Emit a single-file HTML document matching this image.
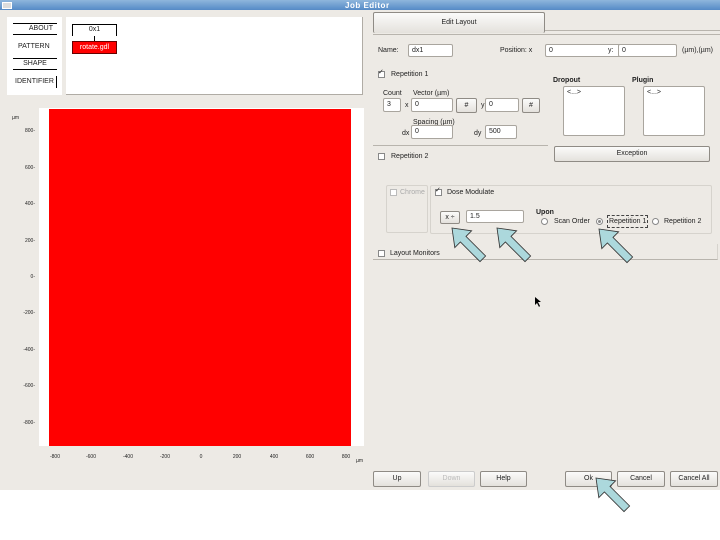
<!DOCTYPE html>
<html><head><style>
*{margin:0;padding:0;box-sizing:border-box}
body{width:720px;height:540px;background:#fff;position:relative;overflow:hidden;font-family:"Liberation Sans",sans-serif;font-size:7px;color:#222}
.a{position:absolute}
.bg{left:0;top:10px;width:720px;height:480px;background:#edeae5}
.t{position:absolute;white-space:nowrap}
.in{position:absolute;background:#fff;border:1px solid #a9a59e;border-radius:2px;padding-left:3px;line-height:12px}
.btn{position:absolute;height:16px;border:1px solid #8f8b85;border-radius:2px;background:linear-gradient(#fbfbfa,#e4e1dc);text-align:center;line-height:14px}
.cb{position:absolute;width:7px;height:7px;border:1px solid #888;background:#fff}
.ln{position:absolute;background:#b8b4ad}
.yl{position:absolute;left:18px;width:17px;font-size:5px;text-align:right}
.xl{position:absolute;top:454px;width:20px;margin-left:-10px;font-size:5px;text-align:center}
</style></head><body>
<div class="a" style="left:0;top:0;width:720px;height:11px;background:linear-gradient(#8fb6dc,#4f86c4)"></div>
<div class="a" style="left:2px;top:2px;width:10px;height:7px;background:#ddd;border:1px solid #fff"></div>
<div class="t" style="left:345px;top:1px;color:#fff;font-size:8px;font-weight:bold;letter-spacing:.5px">Job Editor</div>
<div class="a bg"></div>

<div class="a" style="left:7px;top:17px;width:55px;height:78px;background:#fff"></div>
<div class="a" style="left:13px;top:23px;width:44px;height:12px;border-top:1px solid #000;border-bottom:1px solid #000;text-align:right;padding-right:4px;line-height:10px">ABOUT</div>
<div class="t" style="left:18px;top:43px">PATTERN</div>
<div class="a" style="left:13px;top:58px;width:44px;height:12px;border-top:1px solid #000;border-bottom:1px solid #000;text-align:center;line-height:10px">SHAPE</div>
<div class="t" style="left:15px;top:78px">IDENTIFIER</div>
<div class="a" style="left:56px;top:76px;width:1px;height:12px;background:#000"></div>
<div class="a" style="left:66px;top:17px;width:297px;height:78px;background:#fff;border-right:1px solid #b0aca5;border-bottom:1px solid #b0aca5"></div>
<div class="a" style="left:72px;top:24px;width:45px;height:12px;border:1px solid #000;border-bottom:none;text-align:center;line-height:10px">0x1</div>
<div class="a" style="left:94px;top:36px;width:1px;height:5px;background:#000"></div>
<div class="a" style="left:72px;top:41px;width:45px;height:13px;background:#f00;border:1px solid #600;color:#fff;text-align:center;line-height:11px">rotate.gdl</div>

<div class="a" style="left:39px;top:108px;width:325px;height:338px;background:#fff"></div>
<div class="a" style="left:49px;top:109px;width:302px;height:337px;background:#f00"></div>
<div class="t" style="left:12px;top:115px;font-size:5px">µm</div>
<div class="yl" style="top:128px">800-</div>
<div class="yl" style="top:165px">600-</div>
<div class="yl" style="top:201px">400-</div>
<div class="yl" style="top:238px">200-</div>
<div class="yl" style="top:274px">0-</div>
<div class="yl" style="top:310px">-200-</div>
<div class="yl" style="top:347px">-400-</div>
<div class="yl" style="top:383px">-600-</div>
<div class="yl" style="top:420px">-800-</div>
<div class="xl" style="left:55px">-800</div>
<div class="xl" style="left:91px">-600</div>
<div class="xl" style="left:128px">-400</div>
<div class="xl" style="left:165px">-200</div>
<div class="xl" style="left:201px">0</div>
<div class="xl" style="left:237px">200</div>
<div class="xl" style="left:274px">400</div>
<div class="xl" style="left:310px">600</div>
<div class="xl" style="left:346px">800</div>
<div class="t" style="left:356px;top:458px;font-size:5px">µm</div>

<div class="btn" style="left:373px;top:12px;width:172px;height:21px;line-height:19px;border-bottom:none">Edit Layout</div>
<div class="ln" style="left:545px;top:30px;width:175px;height:1px"></div>
<div class="ln" style="left:373px;top:34px;width:347px;height:1px"></div>

<div class="t" style="left:378px;top:47px">Name:</div>
<div class="in" style="left:408px;top:44px;width:45px;height:13px">dx1</div>
<div class="t" style="left:500px;top:47px">Position: x</div>
<div class="in" style="left:545px;top:44px;width:89px;height:13px">0</div>
<div class="t" style="left:608px;top:47px">y:</div>
<div class="in" style="left:618px;top:44px;width:59px;height:13px">0</div>
<div class="t" style="left:682px;top:47px">(µm),(µm)</div>

<div class="cb" style="left:378px;top:71px"></div><div class="t" style="left:378px;top:68px">✓</div>
<div class="t" style="left:391px;top:71px">Repetition 1</div>
<div class="t" style="left:383px;top:90px">Count</div>
<div class="t" style="left:413px;top:90px">Vector (µm)</div>
<div class="in" style="left:383px;top:98px;width:18px;height:14px">3</div>
<div class="t" style="left:405px;top:102px">x</div>
<div class="in" style="left:411px;top:98px;width:42px;height:14px">0</div>
<div class="btn" style="left:456px;top:98px;width:21px;height:15px">#</div>
<div class="t" style="left:481px;top:102px">y</div>
<div class="in" style="left:485px;top:98px;width:34px;height:14px">0</div>
<div class="btn" style="left:522px;top:98px;width:18px;height:15px">#</div>
<div class="t" style="left:413px;top:119px">Spacing (µm)</div>
<div class="t" style="left:402px;top:130px">dx</div>
<div class="in" style="left:411px;top:125px;width:42px;height:14px">0</div>
<div class="t" style="left:474px;top:130px">dy</div>
<div class="in" style="left:485px;top:125px;width:32px;height:14px">500</div>
<div class="ln" style="left:373px;top:145px;width:175px;height:1px"></div>
<div class="t" style="left:553px;top:77px;font-weight:bold">Dropout</div>
<div class="t" style="left:632px;top:77px;font-weight:bold">Plugin</div>
<div class="in" style="left:563px;top:86px;width:62px;height:50px;line-height:12px">&lt;...&gt;</div>
<div class="in" style="left:643px;top:86px;width:62px;height:50px;line-height:12px">&lt;...&gt;</div>
<div class="cb" style="left:378px;top:153px"></div>
<div class="t" style="left:391px;top:153px">Repetition 2</div>
<div class="btn" style="left:554px;top:146px;width:156px;height:16px">Exception</div>

<div class="a" style="left:386px;top:185px;width:42px;height:48px;border:1px solid #d6d3cd;border-radius:2px"></div>
<div class="cb" style="left:390px;top:189px;border-color:#bbb"></div>
<div class="t" style="left:400px;top:189px;color:#aaa">Chrome</div>
<div class="a" style="left:430px;top:185px;width:282px;height:49px;border:1px solid #d6d3cd;border-radius:2px"></div>
<div class="cb" style="left:435px;top:189px"></div><div class="t" style="left:435px;top:186px">✓</div>
<div class="t" style="left:447px;top:189px">Dose Modulate</div>
<div class="btn" style="left:440px;top:211px;width:20px;height:13px;line-height:11px">x ÷</div>
<div class="in" style="left:466px;top:210px;width:58px;height:13px">1.5</div>
<div class="t" style="left:536px;top:209px;font-weight:bold">Upon</div>
<div class="a" style="left:541px;top:218px;width:7px;height:7px;border:1px solid #888;border-radius:50%;background:#fff"></div>
<div class="t" style="left:554px;top:218px">Scan Order</div>
<div class="a" style="left:596px;top:218px;width:7px;height:7px;border:1px solid #888;border-radius:50%;background:#fff"></div>
<div class="a" style="left:598px;top:220px;width:3px;height:3px;border-radius:50%;background:#888"></div>
<div class="a" style="left:607px;top:215px;width:41px;height:13px;border:1px dashed #444"></div>
<div class="t" style="left:609px;top:218px">Repetition 1</div>
<div class="a" style="left:652px;top:218px;width:7px;height:7px;border:1px solid #888;border-radius:50%;background:#fff"></div>
<div class="t" style="left:664px;top:218px">Repetition 2</div>
<div class="a" style="left:373px;top:244px;width:345px;height:16px;border-right:1px solid #d6d3cd;border-bottom:1px solid #b8b4ad"></div>
<div class="cb" style="left:378px;top:250px"></div>
<div class="t" style="left:390px;top:250px">Layout Monitors</div>

<div class="btn" style="left:373px;top:471px;width:48px">Up</div>
<div class="btn" style="left:428px;top:471px;width:47px;color:#bbb;border-color:#ccc">Down</div>
<div class="btn" style="left:480px;top:471px;width:47px">Help</div>
<div class="btn" style="left:565px;top:471px;width:47px">Ok</div>
<div class="btn" style="left:617px;top:471px;width:48px">Cancel</div>
<div class="btn" style="left:670px;top:471px;width:48px">Cancel All</div>

<svg class="a" style="left:0;top:0" width="720" height="540">
<g fill="#acd8dc" stroke="#333" stroke-width="0.6">
<polygon points="0,0 14,2 10,6 24,20 20,24 6,10 2,14" transform="translate(452,228) scale(1.4)"/>
<polygon points="0,0 14,2 10,6 24,20 20,24 6,10 2,14" transform="translate(497,228) scale(1.4)"/>
<polygon points="0,0 14,2 10,6 24,20 20,24 6,10 2,14" transform="translate(599,229) scale(1.4)"/>
<polygon points="0,0 14,2 10,6 24,20 20,24 6,10 2,14" transform="translate(596,478) scale(1.4)"/>
</g>
<polygon points="535,297 535,305 537,303 539,307 540,306 538,302 541,302" fill="#000"/>
</svg>
</body></html>
